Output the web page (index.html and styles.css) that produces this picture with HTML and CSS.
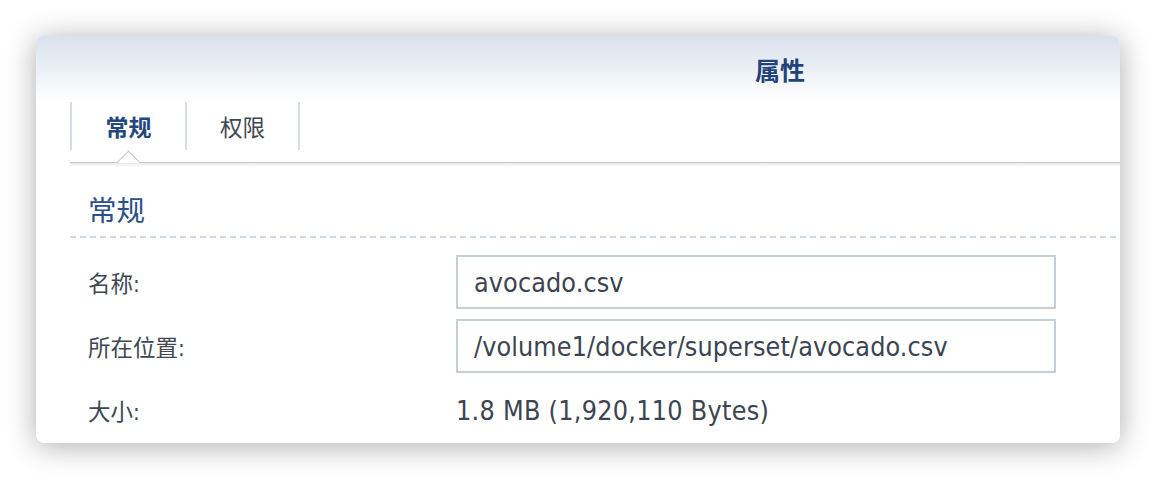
FILE: index.html
```html
<!DOCTYPE html>
<html lang="zh">
<head>
<meta charset="utf-8">
<title>属性</title>
<link rel="stylesheet" href="styles.css">
</head>
<body>
<div class="window">
  <div class="header"><span class="title">属性</span></div>
  <div class="content">
    <div class="tabs">
      <div class="tab active">常规</div>
      <div class="tab">权限</div>
    </div>
    <div class="tabline"><span class="notch"></span></div>
    <div class="section-head"><span class="section-title">常规</span></div>
    <div class="dash"></div>
    <div class="form">
      <div class="label">名称:</div>
      <div class="input">avocado.csv</div>
      <div class="label">所在位置:</div>
      <div class="input">/volume1/docker/superset/avocado.csv</div>
      <div class="label">大小:</div>
      <div class="value">1.8 MB (1,920,110 Bytes)</div>
    </div>
  </div>
</div>
</body>
</html>
```

FILE: styles.css
```css
html, body {
  margin: 0;
  padding: 0;
  background: #ffffff;
}
body {
  width: 1156px;
  height: 480px;
  overflow: hidden;
  font-family: "DejaVu Sans Condensed", "DejaVu Sans", "Noto Sans CJK SC", sans-serif;
  font-stretch: condensed;
}
.window {
  margin: 36px 0 0 36px;
  width: 1084px;
  height: 407px;
  border-radius: 8px;
  background: #ffffff;
  box-shadow: 0 3px 30px rgba(0, 0, 0, 0.33);
  overflow: hidden;
}
.header {
  height: 66px;
  box-sizing: border-box;
  padding-left: 719px;
  display: flex;
  align-items: center;
  background: linear-gradient(#d9e1ec, #ffffff);
}
.title {
  font-family: "Noto Sans CJK SC", sans-serif;
  font-weight: 700;
  font-size: 25px;
  line-height: 1;
  color: #1f437a;
}
.content {
  padding-left: 34px;
}
.tabs {
  display: flex;
  height: 48px;
}
.tab {
  width: 115px;
  box-sizing: border-box;
  border-left: 2px solid #d3dce8;
  display: flex;
  align-items: center;
  justify-content: center;
  font-family: "Noto Sans CJK SC", sans-serif;
  font-size: 22.5px;
  color: #3f4751;
}
.tab:last-child {
  border-right: 2px solid #d3dce8;
}
.tab.active {
  font-weight: 700;
  font-size: 23px;
  color: #24467c;
}
.tabline {
  position: relative;
  height: 12px;
  border-bottom: 1px solid #c6c6c6;
}
.tabline::after {
  content: "";
  position: absolute;
  left: 0;
  right: 0;
  top: 13px;
  height: 4px;
  background: linear-gradient(rgba(0, 0, 0, 0.09), rgba(0, 0, 0, 0));
}
.notch {
  position: absolute;
  left: 46px;
  top: 0;
  width: 24px;
  height: 13px;
  overflow: hidden;
}
.notch::before {
  content: "";
  position: absolute;
  left: 3.5px;
  top: 4px;
  width: 17px;
  height: 17px;
  box-sizing: border-box;
  background: #ffffff;
  border-top: 1px solid #c6c6c6;
  border-left: 1px solid #c6c6c6;
  transform: rotate(45deg);
}
.section-head {
  height: 73px;
  box-sizing: border-box;
  padding: 20px 0 0 18px;
  display: flex;
  align-items: center;
}
.section-title {
  font-family: "Noto Sans CJK SC", sans-serif;
  font-size: 28.5px;
  line-height: 1;
  color: #2c5088;
}
.dash {
  height: 2px;
  background: repeating-linear-gradient(90deg, #cfd9e6 0 6px, transparent 6px 10px);
}
.form {
  display: grid;
  grid-template-columns: 368px 600px;
  grid-auto-rows: 54px;
  row-gap: 10px;
  align-items: center;
  padding-left: 18px;
  margin-top: 17px;
}
.label {
  font-family: "DejaVu Sans Condensed", "DejaVu Sans", "Noto Sans CJK SC", sans-serif;
  font-size: 22.5px;
  color: #3e4752;
}
.input {
  height: 54px;
  box-sizing: border-box;
  border: 2px solid #c6ced9;
  padding-left: 16px;
  display: flex;
  align-items: center;
  font-size: 26.7px;
  letter-spacing: 0.1px;
  color: #3c4450;
}
.value {
  font-size: 26.7px;
  letter-spacing: 0.28px;
  color: #3c4450;
}
```
